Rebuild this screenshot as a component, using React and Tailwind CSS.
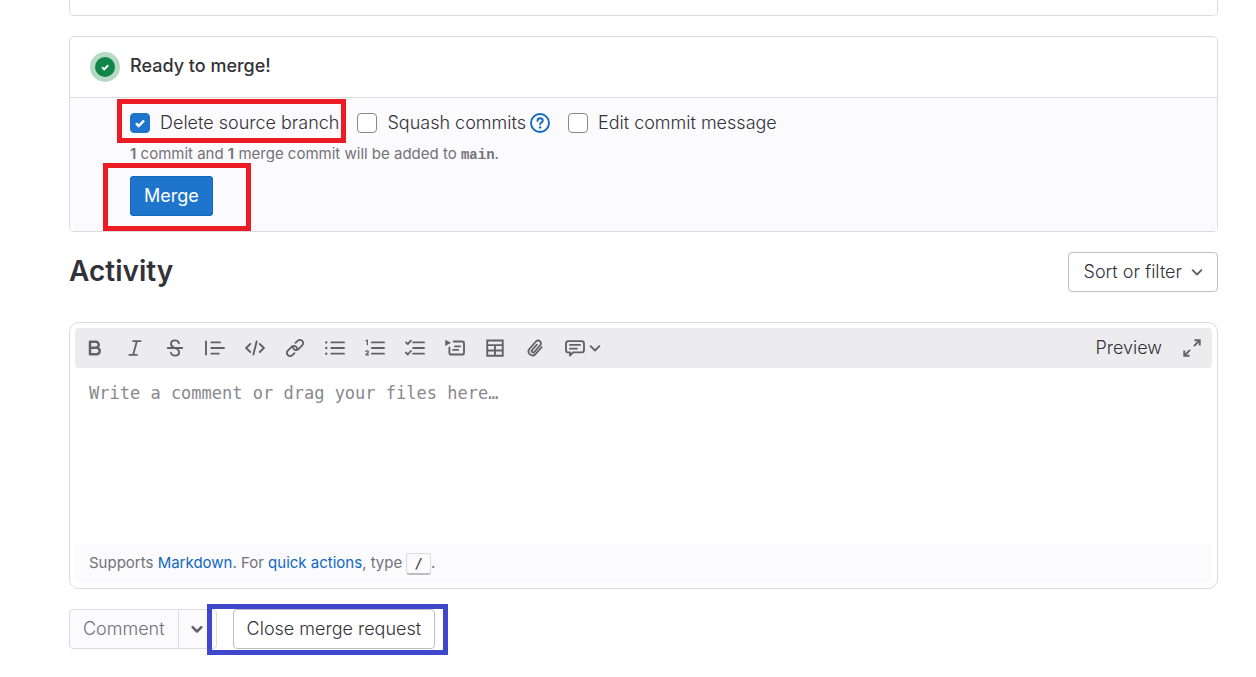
import React, { useState } from 'react';

const Icon = ({ children, className = 'w-5 h-5' }) => (
  <svg
    viewBox="0 0 16 16"
    fill="none"
    stroke="currentColor"
    strokeWidth="1.5"
    strokeLinecap="round"
    strokeLinejoin="round"
    aria-hidden="true"
    className={`flex-shrink-0 ${className}`}
  >
    {children}
  </svg>
);

const ChevronDown = ({ strokeWidth = '1.5' }) => (
  <Icon className="w-5 h-5 text-[#626168]">
    <path d="M4.5 6.5 8 10l3.5-3.5" strokeWidth={strokeWidth} />
  </Icon>
);

const tools = [
  {
    label: 'Bold',
    icon: (
      <path
        d="M4 3h4.6a2.4 2.4 0 0 1 0 4.8H4zM4 7.8h5.2a2.6 2.6 0 0 1 0 5.2H4z"
        strokeWidth="2"
      />
    ),
  },
  { label: 'Italic', icon: <path d="M6.5 2.5h6M3.5 13.5h6M9.5 2.5l-3 11" /> },
  {
    label: 'Strikethrough',
    icon: (
      <path d="M2.2 8h11.6M11.2 4.2C10.8 2.6 9.6 1.9 8 1.9c-1.8 0-3.2 1-3.2 2.8C4.8 6.4 6.2 7.2 8 8c1.9.8 3.3 1.6 3.3 3.4 0 1.7-1.4 2.7-3.3 2.7-1.7 0-2.9-.8-3.3-2.4" />
    ),
  },
  { label: 'Quote', icon: <path d="M.8 2.8v10.4M5 3.5h7M5 8h10.2M5 12.5h6" /> },
  { label: 'Code', icon: <path d="M4.2 4.8.9 8l3.3 3.2M11.8 4.8 15.1 8l-3.3 3.2M9.3 2.8 6.7 13.2" /> },
  {
    label: 'Link',
    icon: (
      <path d="M8.4 3.9l1.660-1.640a2.600 2.600 0 0 1 3.680 3.680l-3 3a2.600 2.600 0 0 1-4.440-1.840M7.600 12.100l-1.660 1.640a2.600 2.600 0 0 1-3.680-3.680l3-3a2.600 2.600 0 0 1 4.440 1.840" />
    ),
  },
  {
    label: 'Bullet list',
    icon: (
      <>
        <path d="M5 3.5h10.2M5 8h10.2M5 12.5h10.2" />
        <path d="M1 3.5h.01M1 8h.01M1 12.5h.01" strokeWidth="1.9" />
      </>
    ),
  },
  {
    label: 'Numbered list',
    icon: (
      <>
        <path d="M5.5 3.5h9.7M5.5 8h9.7M5.5 12.5h9.7" />
        <path d="M.8 2.2 1.9 1.7v3.6M.7 10.7c.5-.7 2-.6 2 .4 0 .8-1.4 1.3-2 2.4h2.2" strokeWidth="1" />
      </>
    ),
  },
  {
    label: 'Checklist',
    icon: (
      <path d="M6.5 3.5h8.7M6.5 8h8.7M6.5 12.5h8.7M.8 3.5 2.2 4.9l2.5-2.8M.8 11.8l1.4 1.4 2.5-2.8" />
    ),
  },
  {
    label: 'Collapsible section',
    icon: (
      <>
        <path d="M.2 1.3v5L4.8 3.8z" fill="currentColor" stroke="none" />
        <path d="M7 2.8h6.7c.8 0 1.5.6 1.5 1.5v7.4c0 .8-.7 1.5-1.5 1.5H5c-.9 0-1.5-.7-1.5-1.5V7.5M8 6.7h4M6.5 9.5h4" />
      </>
    ),
  },
  {
    label: 'Table',
    icon: (
      <path d="M1.8 2h12.4v12.2H1.8zM1.8 5.7h12.4M1.8 10h12.4M8 5.7v8.5" strokeLinejoin="miter" />
    ),
  },
  {
    label: 'Attach a file',
    icon: (
      <path d="m13.3 7.4-5 5.6a3.2 3.2 0 0 1-4.8-4.2l5.2-6a2.3 2.3 0 0 1 3.5 3l-4.7 5.4a1.2 1.2 0 0 1-1.8-1.6L9.5 5.3" />
    ),
  },
];

const CommentIcon = () => (
  <Icon>
    <path d="M2.8 2.5h10.4c1.1 0 2 .9 2 2v5c0 1.1-.9 2-2 2H6.5L4 14v-2.5H2.800c-1.1 0-2-.9-2-2v-5c0-1.1.9-2 2-2zM4 5.5h8M4 8.5h5.5" />
  </Icon>
);

const Checkbox = ({ id, label, defaultChecked = false }) => (
  <label htmlFor={id} className="relative flex items-center gap-2.5">
    <input
      id={id}
      type="checkbox"
      defaultChecked={defaultChecked}
      className="peer appearance-none w-5 h-5 rounded border border-[#89888d] bg-white checked:bg-[#1f75cb] checked:border-[#1f75cb]"
    />
    <svg
      viewBox="0 0 20 20"
      fill="none"
      stroke="white"
      strokeWidth="2.5"
      aria-hidden="true"
      className="absolute left-0 w-5 h-5 hidden peer-checked:block pointer-events-none"
    >
      <path d="m6 10.3 2.7 2.7 5.3-5.5" />
    </svg>
    {label}
  </label>
);

const MergePanel = () => (
  <section className="mt-5 border border-[#dcdcde] rounded-[5px]">
    <div className="h-[60px] px-5 flex items-center gap-2.5">
      <svg viewBox="0 0 30 30" aria-hidden="true" className="w-[30px] h-[30px] flex-shrink-0">
        <circle cx="15" cy="15" r="15" fill="#b7dac6" />
        <circle cx="15" cy="15" r="10" fill="#108548" />
        <path d="m12 15.2 2.2 2.2 4-4.2" fill="none" stroke="white" strokeWidth="2" />
      </svg>
      <h2 className="font-medium leading-6 text-[#333238] pb-0.5">Ready to merge!</h2>
    </div>

    <div className="border-t border-[#dcdcde] bg-[#fbfafd] rounded-b pl-[60px] pr-5 pt-[13px] pb-[15px]">
      <div className="flex flex-wrap items-center gap-x-[18px] font-light leading-6">
        <div className="relative">
          <Checkbox id="delete-branch" label="Delete source branch" defaultChecked />
          <div className="absolute -left-[13px] -right-[7px] -top-3 -bottom-2 border-[5px] border-[#ed1c24] pointer-events-none" />
        </div>
        <div className="flex items-center gap-1">
          <Checkbox id="squash" label="Squash commits" />
          <button type="button" aria-label="Help" className="text-[#1068bf]">
            <Icon>
              <circle cx="8" cy="8" r="7.2" />
              <path d="M6 6.3C6 5 6.9 4.2 8.1 4.2s2.1.8 2.1 1.9c0 1.5-2.1 1.5-2.1 2.9" />
              <path d="M8.1 11.5h.01" strokeWidth="1.9" />
            </Icon>
          </button>
        </div>
        <Checkbox id="edit-message" label="Edit commit message" />
      </div>

      <p className="pt-[9px] text-[15px] leading-5 text-[#737278]">
        <strong className="font-semibold">1</strong> commit and{' '}
        <strong className="font-semibold">1</strong> merge commit will be added to{' '}
        <span className="font-['Liberation_Mono',monospace] font-bold text-sm">main</span>.
      </p>

      <div className="relative mt-[11px] w-fit">
        <button
          type="button"
          className="h-10 px-3.5 rounded bg-[#1f75cb] text-white shadow-[inset_0_0_0_1px_#1068bf]"
        >
          Merge
        </button>
        <div className="absolute -left-[27px] -right-[38px] -top-[13px] -bottom-[15px] border-[5px] border-[#ed1c24] pointer-events-none" />
      </div>
    </div>
  </section>
);

const CommentEditor = () => {
  const [comment, setComment] = useState('');

  return (
    <div className="mt-[30px] p-[5px] border border-[#dcdcde] rounded-[10px]">
      <div className="flex items-center h-10 rounded bg-[#ececef] text-[#626168]">
        {tools.map((tool) => (
          <button
            key={tool.label}
            type="button"
            aria-label={tool.label}
            className="w-10 h-10 flex items-center justify-center"
          >
            <Icon>{tool.icon}</Icon>
          </button>
        ))}
        <button type="button" aria-label="Insert comment template" className="h-10 px-2.5 flex items-center">
          <CommentIcon />
          <ChevronDown />
        </button>
        <button type="button" className="ml-auto h-10 px-2.5 font-light text-[#333238]">
          Preview
        </button>
        <button type="button" aria-label="Go full screen" className="w-10 h-10 flex items-center justify-center">
          <Icon>
            <path
              d="M10 1.8h4.2V6M14 2 9.5 6.5M6 14.2H1.8V10M2 14l4.5-4.5"
              strokeLinejoin="miter"
              strokeLinecap="butt"
            />
          </Icon>
        </button>
      </div>

      <textarea
        aria-label="Comment"
        value={comment}
        onChange={(e) => setComment(e.target.value)}
        placeholder="Write a comment or drag your files here…"
        className="block w-full h-[175px] px-3.5 py-[13px] resize-none outline-none font-['DejaVu_Sans_Mono',monospace] text-[17px] leading-6 text-[#333238] placeholder:text-[#89888d]"
      />

      <div className="h-10 px-3.5 flex items-center rounded bg-[#fbfafd] text-[15px] text-[#737278]">
        <p>
          Supports{' '}
          <a href="#markdown" className="text-[#1068bf]">Markdown</a>. For{' '}
          <a href="#quick-actions" className="text-[#1068bf]">quick actions</a>, type{' '}
          <kbd className="inline-block px-[7px] rounded-[3px] border border-[#dcdcde] border-b-2 border-b-[#bfbfc3] bg-[#fbfafd] font-['DejaVu_Sans_Mono',monospace] text-sm leading-[19px] text-[#333238]">
            /
          </kbd>
          .
        </p>
      </div>
    </div>
  );
};

export default function App() {
  return (
    <main className="min-h-screen bg-white pl-[69px] pr-[38px] pb-7 font-['Inter',sans-serif] text-lg text-[#333238]">
      <div className="h-4 border border-t-0 border-[#dcdcde] rounded-b-[5px]" />

      <MergePanel />

      <div className="mt-5 flex items-center justify-between">
        <h2 className="text-[28px] leading-9 font-semibold pb-0.5">Activity</h2>
        <button
          type="button"
          className="h-10 pl-[15px] pr-2.5 flex items-center gap-[5px] rounded border border-[#bfbfc3] font-light"
        >
          Sort or filter
          <ChevronDown />
        </button>
      </div>

      <CommentEditor />

      <div className="mt-5 flex items-center font-light">
        <div className="flex h-10 rounded border border-[#dcdcde] bg-[#fbfafd] text-[#737278]">
          <button type="button" className="px-[13px]">Comment</button>
          <button
            type="button"
            aria-label="Comment options"
            className="w-[38px] border-l border-[#dcdcde] flex items-center justify-center"
          >
            <ChevronDown strokeWidth="2" />
          </button>
        </div>
        <div className="relative ml-4">
          <button type="button" className="h-10 px-[13px] rounded border border-[#bfbfc3] bg-white">
            Close merge request
          </button>
          <div className="absolute -left-[26px] -right-[13px] -top-[5px] -bottom-1.5 border-[5px] border-[#3f48cc] pointer-events-none" />
        </div>
      </div>
    </main>
  );
}
